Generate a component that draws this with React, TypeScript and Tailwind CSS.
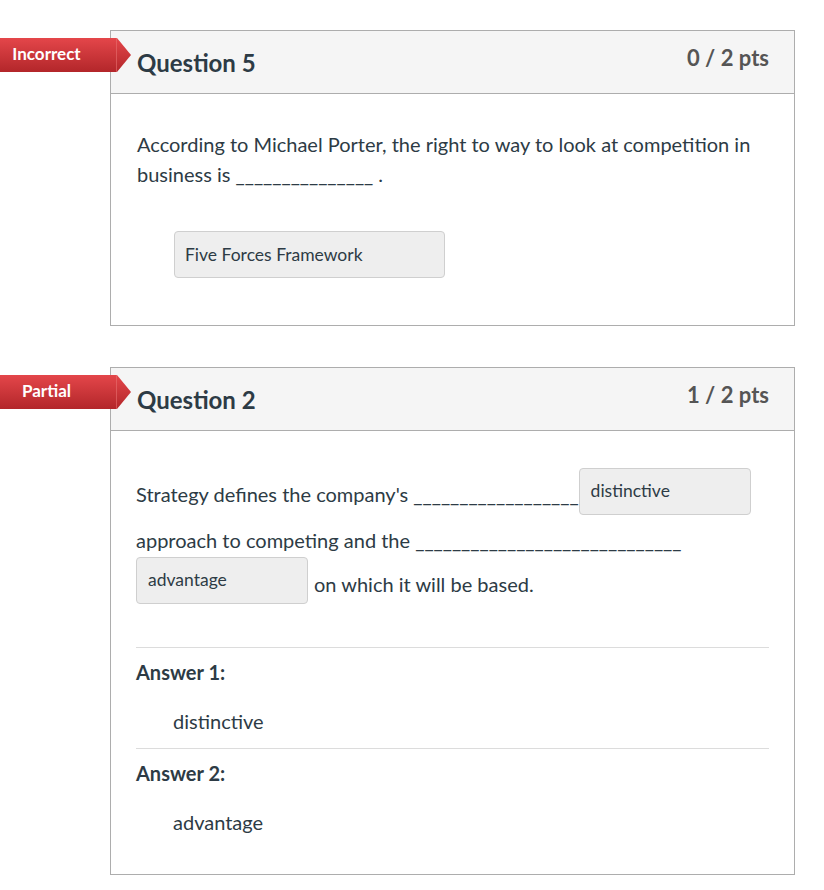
import React from "react";

const font = { fontFamily: "Lato, 'Noto Sans', sans-serif" };

function Badge({ label }: { label: string }) {
  return (
    <div className="absolute left-[-111px] top-[7px] h-[34px] w-[131px] bg-gradient-to-b from-[#e4464a] to-[#b3262a] [clip-path:polygon(0_0,117px_0,131px_50%,117px_100%,0_100%)]">
      <div className="absolute left-[116px] top-0 h-full w-px bg-[#e87070] opacity-60" />
      <div className="flex h-full w-[93px] items-center justify-center pb-[2px] text-[17px] font-bold text-white">
        {label}
      </div>
    </div>
  );
}

function Header({ title, pts }: { title: string; pts: string }) {
  return (
    <div className="flex h-[63px] items-start justify-between border-b border-[#adadad] bg-[#f5f5f5] pl-[26px] pr-[25px]">
      <div className="pt-[18px] text-[24px] font-bold leading-[28px] text-[#2d3b45]">{title}</div>
      <div className="pt-[14px] text-[22px] font-bold leading-[26px] text-[#555555]">{pts}</div>
    </div>
  );
}

function Box({ children, w, cls }: { children: React.ReactNode; w: string; cls?: string }) {
  return (
    <div className={`h-[47px] rounded-[4px] border border-[#cfcfcf] bg-[#eeeeee] text-[#2d3b45] ${w} ${cls ?? ""}`}>
      {children}
    </div>
  );
}

export default function App() {
  return (
    <div className="min-h-[890px] w-[824px] bg-white pt-[30px]" style={font}>
      {/* Card 1 */}
      <div className="relative ml-[110px] w-[685px] border border-[#adadad]">
        <Badge label="Incorrect" />
        <Header title="Question 5" pts="0 / 2 pts" />
        <div className="px-[26px] pb-[47px] pt-[35px] text-[20px] leading-[30px] text-[#2d3b45]">
          <p>
            According to Michael Porter, the right to way to look at competition in business is _______________ .
          </p>
          <div className="mt-[42px] pl-[37px]">
            <Box w="w-[271px]">
              <div className="flex h-full items-center pl-[10px] text-[17.5px]">Five Forces Framework</div>
            </Box>
          </div>
        </div>
      </div>

      {/* Card 2 */}
      <div className="relative ml-[110px] mt-[41px] w-[685px] border border-[#adadad]">
        <Badge label="Partial" />
        <Header title="Question 2" pts="1 / 2 pts" />
        <div className="px-[25px] pt-[37px] text-[20px] leading-[30px] text-[#2d3b45]">
          <div className="flex items-start">
            <span className="mt-[11px] whitespace-pre">Strategy defines the company's __________________</span>
            <Box w="w-[172px]" cls="shrink-0">
              <div className="pl-[11px] pt-[9px] text-[17.5px] leading-[26px]">distinctive</div>
            </Box>
          </div>
          <div className="mt-[10px] whitespace-pre">approach to competing and the _____________________________</div>
          <div className="mt-[2px] flex items-start">
            <Box w="w-[172px]" cls="shrink-0">
              <div className="pl-[11px] pt-[9px] text-[17.5px] leading-[26px]">advantage</div>
            </Box>
            <span className="ml-[6px] mt-[12px]">on which it will be based.</span>
          </div>
          <div className="mt-[43px] border-t border-[#dcdcdc]" />
          <div className="pt-[11px] text-[20px] font-bold leading-[26px]">Answer 1:</div>
          <div className="pl-[37px] pt-[23px] text-[20px] leading-[26px]">distinctive</div>
          <div className="mt-[14px] border-t border-[#dcdcdc]" />
          <div className="pt-[11px] text-[20px] font-bold leading-[26px]">Answer 2:</div>
          <div className="pl-[37px] pt-[23px] text-[20px] leading-[26px]">advantage</div>
          <div className="h-[39px]" />
        </div>
      </div>
    </div>
  );
}
